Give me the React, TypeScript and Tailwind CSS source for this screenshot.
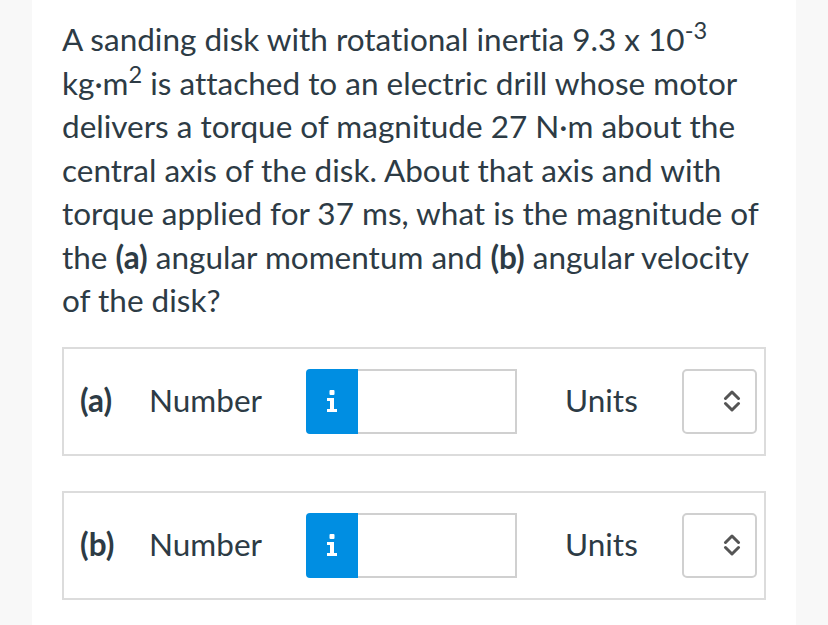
import React from 'react';

const InfoIcon = () => (
  <svg width="10" height="22" viewBox="0 0 10 22" fill="#ffffff">
    <rect x="2.5" y="0" width="5" height="5" rx="1" />
    <path d="M0 8h7v11h3v3H0v-3h3v-8H0z" />
  </svg>
);

const SortIcon = () => (
  <svg width="18" height="22" viewBox="0 0 18 22" fill="none" stroke="#555555" strokeWidth="3" strokeLinecap="round" strokeLinejoin="round">
    <path d="M2.5 8.5L9 2l6.5 6.5" />
    <path d="M2.5 13.5L9 20l6.5-6.5" />
  </svg>
);

interface AnswerRowProps {
  part: string;
}

const AnswerRow: React.FC<AnswerRowProps> = ({ part }) => {
  return (
    <div className="flex items-center border-2 border-[#dcdcdc] h-[109px] pl-4 pr-[6px] whitespace-nowrap">
      <span className="font-bold w-[34px] shrink-0">({part})</span>
      <span className="ml-[35px] w-[113px] shrink-0">Number</span>
      <div className="ml-[44px] flex h-[65px] shrink-0">
        <div className="w-[52px] h-full bg-[#008ee2] rounded-l-[4px] flex items-center justify-center">
          <InfoIcon />
        </div>
        <input
          type="text"
          className="w-[159px] h-full border-2 border-l-0 border-[#d0d0d0] bg-white outline-none px-2"
        />
      </div>
      <span className="ml-[48px] w-[72px] shrink-0">Units</span>
      <div className="ml-[45px] w-[75px] h-[65px] shrink-0 border-2 border-[#d0d0d0] rounded-[5px] flex items-center justify-end pr-[14px]">
        <SortIcon />
      </div>
    </div>
  );
};

const App: React.FC = () => {
  return (
    <div className="min-h-screen bg-[#f8f8f8] flex" style={{ fontFamily: 'Lato, "Noto Sans", sans-serif' }}>
      <div className="ml-[32px] w-[764px] min-h-screen bg-white px-[30px] pt-[18px] text-[#2d3b45] text-[31.5px] leading-[43.5px] [font-variant-ligatures:none]">
        <p>
          A sanding disk with rotational inertia 9.3 x 10<sup>-3</sup> kg·m<sup>2</sup> is attached to an electric
          drill whose motor delivers a torque of magnitude 27 N·m about the central axis of the disk. About that
          axis and with torque applied for 37 ms, what is the magnitude of the <b>(a)</b> angular momentum and{' '}
          <b>(b)</b> angular velocity of the disk?
        </p>
        <div className="mt-6 flex flex-col gap-[35px]">
          <AnswerRow part="a" />
          <AnswerRow part="b" />
        </div>
      </div>
    </div>
  );
};

export default App;
